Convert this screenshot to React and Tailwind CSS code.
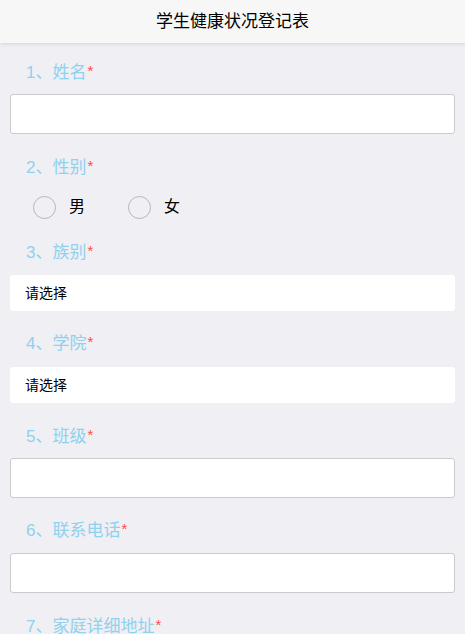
import React from "react";

const font = { fontFamily: '"Liberation Sans", "Noto Sans CJK SC", sans-serif' };

function Label({ children, className = "" }) {
  return (
    <div className={`shrink-0 h-[24px] leading-[24px] pl-[26px] text-[17px] text-[#8fd1ee] ${className}`}>
      <span className="relative top-[1px]">{children}</span>
      <span className="text-[#ff4a4a] text-[15px] align-top relative top-[-1px] ml-[1px]">*</span>
    </div>
  );
}

function TextInput({ className = "" }) {
  return (
    <div className={`shrink-0 mx-[10px] h-[40px] bg-white border border-[#cbcbcb] rounded-[3px] ${className}`} />
  );
}

function Select({ className = "" }) {
  return (
    <div className={`shrink-0 mx-[10px] h-[36px] bg-white rounded-[3px] flex items-center pl-[15px] text-[14px] text-black ${className}`}>
      请选择
    </div>
  );
}

function Radio({ label, className = "" }) {
  return (
    <div className={`flex items-center ${className}`}>
      <div className="w-[23px] h-[23px] rounded-full border border-[#b8b8b8]" />
      <span className="ml-[13px] text-[16px] text-black">{label}</span>
    </div>
  );
}

export default function App() {
  return (
    <div className="w-[465px] h-[634px] bg-[#efeff4] overflow-hidden flex flex-col" style={font}>
      <div className="h-[43px] shrink-0 bg-[#f7f7f7] shadow-[0_1px_4px_rgba(0,0,0,0.12)] flex items-center justify-center text-[17px] text-black relative z-10">
        学生健康状况登记表
      </div>

      <Label className="mt-[17px]">1、姓名</Label>
      <TextInput className="mt-[10px]" />

      <Label className="mt-[21px]">2、性别</Label>
      <div className="shrink-0 mt-[17px] h-[22px] flex items-center pl-[33px]">
        <Radio label="男" />
        <Radio label="女" className="ml-[43px]" />
      </div>

      <Label className="mt-[22px]">3、族别</Label>
      <Select className="mt-[11px]" />

      <Label className="mt-[20px]">4、学院</Label>
      <Select className="mt-[12px]" />

      <Label className="mt-[21px]">5、班级</Label>
      <TextInput className="mt-[10px]" />

      <Label className="mt-[20px]">6、联系电话</Label>
      <TextInput className="mt-[11px]" />

      <Label className="mt-[21px]">7、家庭详细地址</Label>
    </div>
  );
}
